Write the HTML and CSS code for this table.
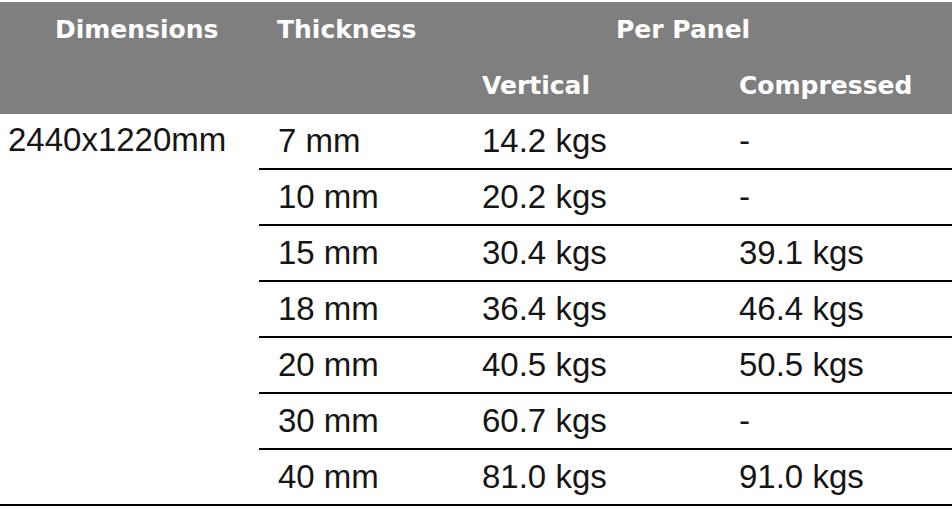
FILE: index.html
```html
<!DOCTYPE html>
<html>
<head>
<meta charset="utf-8">
<link rel="stylesheet" href="styles.css">
</head>
<body>
<table class="spec">
  <colgroup>
    <col class="c-dim"><col class="c-thk"><col class="c-ver"><col class="c-cmp">
  </colgroup>
  <thead>
    <tr class="h1">
      <th class="h-dim" rowspan="2">Dimensions</th>
      <th class="h-thk" rowspan="2">Thickness</th>
      <th class="h-per" colspan="2">Per Panel</th>
    </tr>
    <tr class="h2">
      <th class="h-ver">Vertical</th>
      <th class="h-cmp">Compressed</th>
    </tr>
  </thead>
  <tbody>
    <tr><td class="dim" rowspan="7">2440x1220mm</td><td class="thk">7 mm</td><td class="ver">14.2 kgs</td><td class="cmp">-</td></tr>
    <tr><td class="thk">10 mm</td><td class="ver">20.2 kgs</td><td class="cmp">-</td></tr>
    <tr><td class="thk">15 mm</td><td class="ver">30.4 kgs</td><td class="cmp">39.1 kgs</td></tr>
    <tr><td class="thk">18 mm</td><td class="ver">36.4 kgs</td><td class="cmp">46.4 kgs</td></tr>
    <tr><td class="thk">20 mm</td><td class="ver">40.5 kgs</td><td class="cmp">50.5 kgs</td></tr>
    <tr><td class="thk">30 mm</td><td class="ver">60.7 kgs</td><td class="cmp">-</td></tr>
    <tr><td class="thk">40 mm</td><td class="ver">81.0 kgs</td><td class="cmp">91.0 kgs</td></tr>
  </tbody>
</table>
</body>
</html>
```
FILE: styles.css
```css
html, body {
  margin: 0;
  padding: 0;
  background: #ffffff;
}
body {
  padding-top: 2px;
}
.spec {
  width: 952px;
  border-collapse: collapse;
  table-layout: fixed;
  border-spacing: 0;
}
.c-dim { width: 259px; }
.c-thk { width: 193px; }
.c-ver { width: 223px; }
.c-cmp { width: 277px; }

.spec th {
  background: #7f7f7f;
  color: #ffffff;
  font-family: "DejaVu Sans", sans-serif;
  font-weight: bold;
  font-size: 25px;
  text-align: left;
  padding: 0;
  white-space: nowrap;
}
.h1 th {
  height: 55px;
  line-height: 55px;
  vertical-align: top;
}
.h2 th {
  height: 56px;
  line-height: 56px;
  vertical-align: top;
  padding-top: 1px;
}
.h-dim { padding-left: 55px !important; }
.h-thk { padding-left: 18px !important; }
.h-per { padding-left: 164px !important; }
.h-ver { padding-left: 30px !important; }
.h-cmp { padding-left: 64px !important; }

.spec td {
  font-family: "Liberation Sans", Arial, sans-serif;
  font-size: 33px;
  color: #151515;
  height: 54px;
  line-height: 53px;
  padding: 0;
  vertical-align: top;
  white-space: nowrap;
  border-bottom: 2px solid #000000;
}
.spec td.dim {
  padding-left: 8px;
  line-height: 51px;
}
.spec td.thk { padding-left: 19px; }
.spec td.ver { padding-left: 30px; }
.spec td.cmp { padding-left: 64px; }
```
